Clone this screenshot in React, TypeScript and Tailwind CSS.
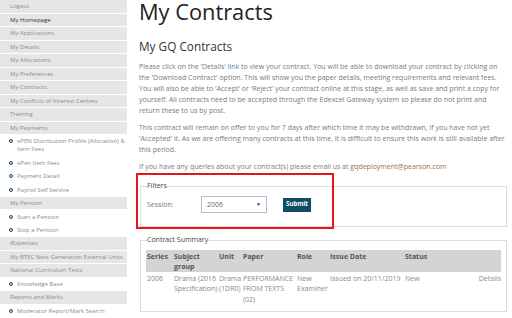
import React from "react";

type NavItem = { label: string; kind: "head" | "bullet"; active?: boolean; tall?: boolean };

const nav: NavItem[] = [
  { label: "Logout", kind: "head" },
  { label: "My Homepage", kind: "head", active: true },
  { label: "My Applications", kind: "head" },
  { label: "My Details", kind: "head" },
  { label: "My Allocations", kind: "head" },
  { label: "My Preferences", kind: "head" },
  { label: "My Contracts", kind: "head" },
  { label: "My Conflicts of Interest Centres", kind: "head" },
  { label: "Training", kind: "head" },
  { label: "My Payments", kind: "head" },
  { label: "ePEN Distribution Profile (Allocation) & Item Fees", kind: "bullet", tall: true },
  { label: "ePen Item Fees", kind: "bullet" },
  { label: "Payment Detail", kind: "bullet" },
  { label: "Payroll Self Service", kind: "bullet" },
  { label: "My Pension", kind: "head" },
  { label: "Start a Pension", kind: "bullet" },
  { label: "Stop a Pension", kind: "bullet" },
  { label: "iExpenses", kind: "head" },
  { label: "My BTEC Next Generation External Units", kind: "head" },
  { label: "National Curriculum Tests", kind: "head" },
  { label: "Knowledge Base", kind: "bullet" },
  { label: "Reports and Marks", kind: "head" },
  { label: "Moderator Report/Mark Search", kind: "bullet" },
];

function Sidebar() {
  return (
    <div className="w-[127px] shrink-0 flex flex-col">
      {nav.map((item) =>
        item.kind === "head" ? (
          <div
            key={item.label}
            className={
              "h-[13.6px] bg-[#e6e6e6] border-b border-white pl-[10px] flex items-center text-[6px] leading-none whitespace-nowrap " +
              (item.active ? "text-[#1b3a55]" : "text-[#8c8c8c]")
            }
          >
            {item.label}
          </div>
        ) : (
          <div
            key={item.label}
            className={
              "bg-white pl-[9px] flex gap-[4px] text-[6px] text-[#8c8c8c] " +
              (item.tall ? "h-[21px] leading-[8px] items-start pt-[2px]" : "h-[13.6px] leading-none items-center")
            }
          >
            <span
              className={
                "w-[4px] h-[4px] rounded-full border-[1.3px] border-[#1d4466] bg-[#dde8f0] shrink-0 " +
                (item.tall ? "mt-[2px]" : "")
              }
            />
            {item.tall ? (
              <span className="flex flex-col whitespace-nowrap">
                <span>ePEN Distribution Profile (Allocation) &amp;</span>
                <span>Item Fees</span>
              </span>
            ) : (
              <span>{item.label}</span>
            )}
          </div>
        )
      )}
    </div>
  );
}

const cols = [
  { h: "Series", w: "w-[27px]" },
  { h: "Subject group", w: "w-[45px]" },
  { h: "Unit", w: "w-[24px]" },
  { h: "Paper", w: "w-[54px]" },
  { h: "Role", w: "w-[33px]" },
  { h: "Issue Date", w: "w-[75px]" },
  { h: "Status", w: "w-[73px]" },
  { h: "", w: "" },
];

const row = [
  "2006",
  "Drama (2016 Specification)",
  "Drama (1DR0)",
  "PERFORMANCE FROM TEXTS (02)",
  "New Examiner",
  "Issued on 20/11/2019",
  "New",
];

export default function App() {
  return (
    <div
      className="w-[512px] h-[318px] overflow-hidden bg-white flex"
      style={{ fontFamily: "'Open Sans', 'Liberation Sans', sans-serif" }}
    >
      <Sidebar />
      <main className="flex-1 pl-[12px] pr-[3px] text-[7px] leading-[11px] text-[#7a7a7a]">
        <h1 className="text-[21.8px] leading-[26px] text-[#222] -mt-[1px]">My Contracts</h1>
        <h2 className="text-[11.8px] leading-[14px] text-[#333] mt-[14px]">My GQ Contracts</h2>
        <p className="mt-[8px]">
          Please click on the 'Details' <span className="text-[#5a7fa6]">link</span> to view your contract. You will be able to download your contract by clicking on the 'Download Contract' option. This will show you the paper details, meeting requirements and relevant fees. You will also be able to 'Accept' or 'Reject' your contract online at this stage, as well as save and print a copy for yourself. All contracts need to be accepted through the Edexcel Gateway system so please do not print and return these to us by post.
        </p>
        <p className="mt-[6px]">
          This contract will remain on offer to you for 7 days after which time it may be withdrawn, if you have not yet 'Accepted' it. As we are offering many contracts at this time, it is difficult to ensure this work is still available after this period.
        </p>
        <p className="mt-[6px]">
          If you have any queries about your contract(s) please email us at{" "}
          <span className="text-[#9a7050]">gqdeployment@pearson.com</span>
        </p>

        {/* Filters */}
        <div className="relative mt-[10px] ml-[1px] mr-[2px]">
          <fieldset className="border border-[#dcdcdc] h-[45px] px-[6px]">
            <legend className="text-[7px] text-[#444] px-0 leading-[8px]">Filters</legend>
            <div className="flex items-center mt-[6px]">
              <span className="w-[54px]">Session:</span>
              <div className="w-[66px] h-[17px] border border-[#a9c0d6] flex items-center justify-between px-[5px] text-[#666]">
                <span>2006</span>
                <span className="text-[5px] text-[#333]">▼</span>
              </div>
              <button className="ml-[16px] h-[14px] px-[3px] bg-[#0e4d63] text-white font-bold text-[6.2px] leading-none">
                Submit
              </button>
            </div>
          </fieldset>
          <div className="absolute left-[-4px] top-[-9px] w-[198px] h-[56px] border-2 border-[#e8141b]" />
        </div>

        {/* Contract summary */}
        <fieldset className="border border-[#dcdcdc] mt-[9px] ml-[1px] mr-[2px] h-[76px] px-[5px]">
          <legend className="text-[7px] text-[#444] leading-[8px] ml-[1px]">Contract Summary</legend>
          <table className="w-full table-fixed border-collapse mt-[6px]">
            <thead>
              <tr className="bg-[#d4d4d4] align-top">
                {cols.map((c, i) => (
                  <th key={i} className={c.w + " text-left font-bold text-[#555] pl-[1px] pt-[2px] pb-[1px] leading-[9.5px]"}>
                    {c.h === "Subject group" ? (
                      <>
                        Subject
                        <br />
                        group
                      </>
                    ) : (
                      c.h
                    )}
                  </th>
                ))}
              </tr>
            </thead>
            <tbody>
              <tr className="align-top">
                {row.map((v, i) => (
                  <td key={i} className="pl-[1px] pt-[2px] leading-[10.3px] text-[#8a8a8a]">
                    {v}
                  </td>
                ))}
                <td className="text-right pt-[2px] leading-[10.3px] text-[#8a8a8a]">Details</td>
              </tr>
            </tbody>
          </table>
        </fieldset>
      </main>
    </div>
  );
}
